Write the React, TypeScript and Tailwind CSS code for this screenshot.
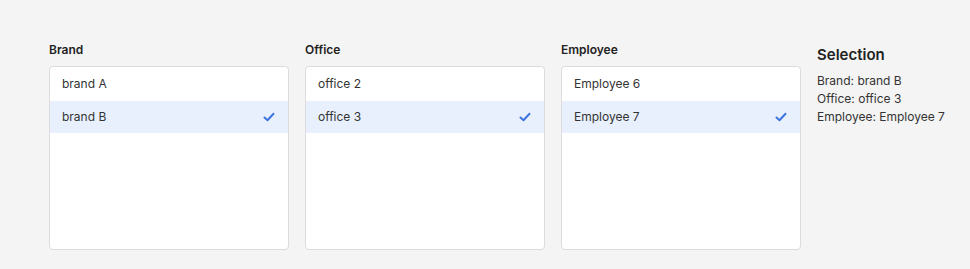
interface ListProps {
  label: string;
  items: string[];
  selected: string;
}

function CheckMark() {
  return (
    <svg width="12" height="10" viewBox="0 0 12 10" className="text-[#3d74e0]">
      <path
        d="M1.5 5.5 L4.5 8.2 L10.5 1.8"
        fill="none"
        stroke="currentColor"
        strokeWidth="2"
        strokeLinecap="round"
        strokeLinejoin="round"
      />
    </svg>
  );
}

function SelectList({ label, items, selected }: ListProps) {
  return (
    <div className="flex w-[240px] shrink-0 flex-col">
      <div className="mb-[9px] h-[15px] text-[12px] font-semibold leading-[15px] text-[#222]">
        {label}
      </div>
      <div className="h-[184px] overflow-hidden rounded-[4px] border border-[#dcdcdc] bg-white">
        {items.map((item) => {
          const active = item === selected;
          return (
            <div
              key={item}
              className={
                active
                  ? "flex h-[32px] items-center justify-between bg-[#e8f0fd] pl-[12px] pr-[13px] text-[12px] text-[#333]"
                  : "flex h-[34px] items-center justify-between pl-[12px] pr-[13px] text-[12px] text-[#333]"
              }
            >
              <span>{item}</span>
              {active && <CheckMark />}
            </div>
          );
        })}
      </div>
    </div>
  );
}

export default function App() {
  return (
    <div className="min-h-[269px] bg-[#f4f4f4] px-[49px] pt-[42px] font-['Inter',sans-serif]">
      <div className="flex gap-[16px]">
        <SelectList label="Brand" items={["brand A", "brand B"]} selected="brand B" />
        <SelectList label="Office" items={["office 2", "office 3"]} selected="office 3" />
        <SelectList label="Employee" items={["Employee 6", "Employee 7"]} selected="Employee 7" />
        <div className="flex shrink-0 flex-col whitespace-nowrap pt-[3px]">
          <h2 className="mb-[7px] text-[15px] font-semibold leading-[20px] text-[#222]">Selection</h2>
          <div className="text-[12px] leading-[18px] text-[#333]">
            <div>Brand: brand B</div>
            <div>Office: office 3</div>
            <div>Employee: Employee 7</div>
          </div>
        </div>
      </div>
    </div>
  );
}
